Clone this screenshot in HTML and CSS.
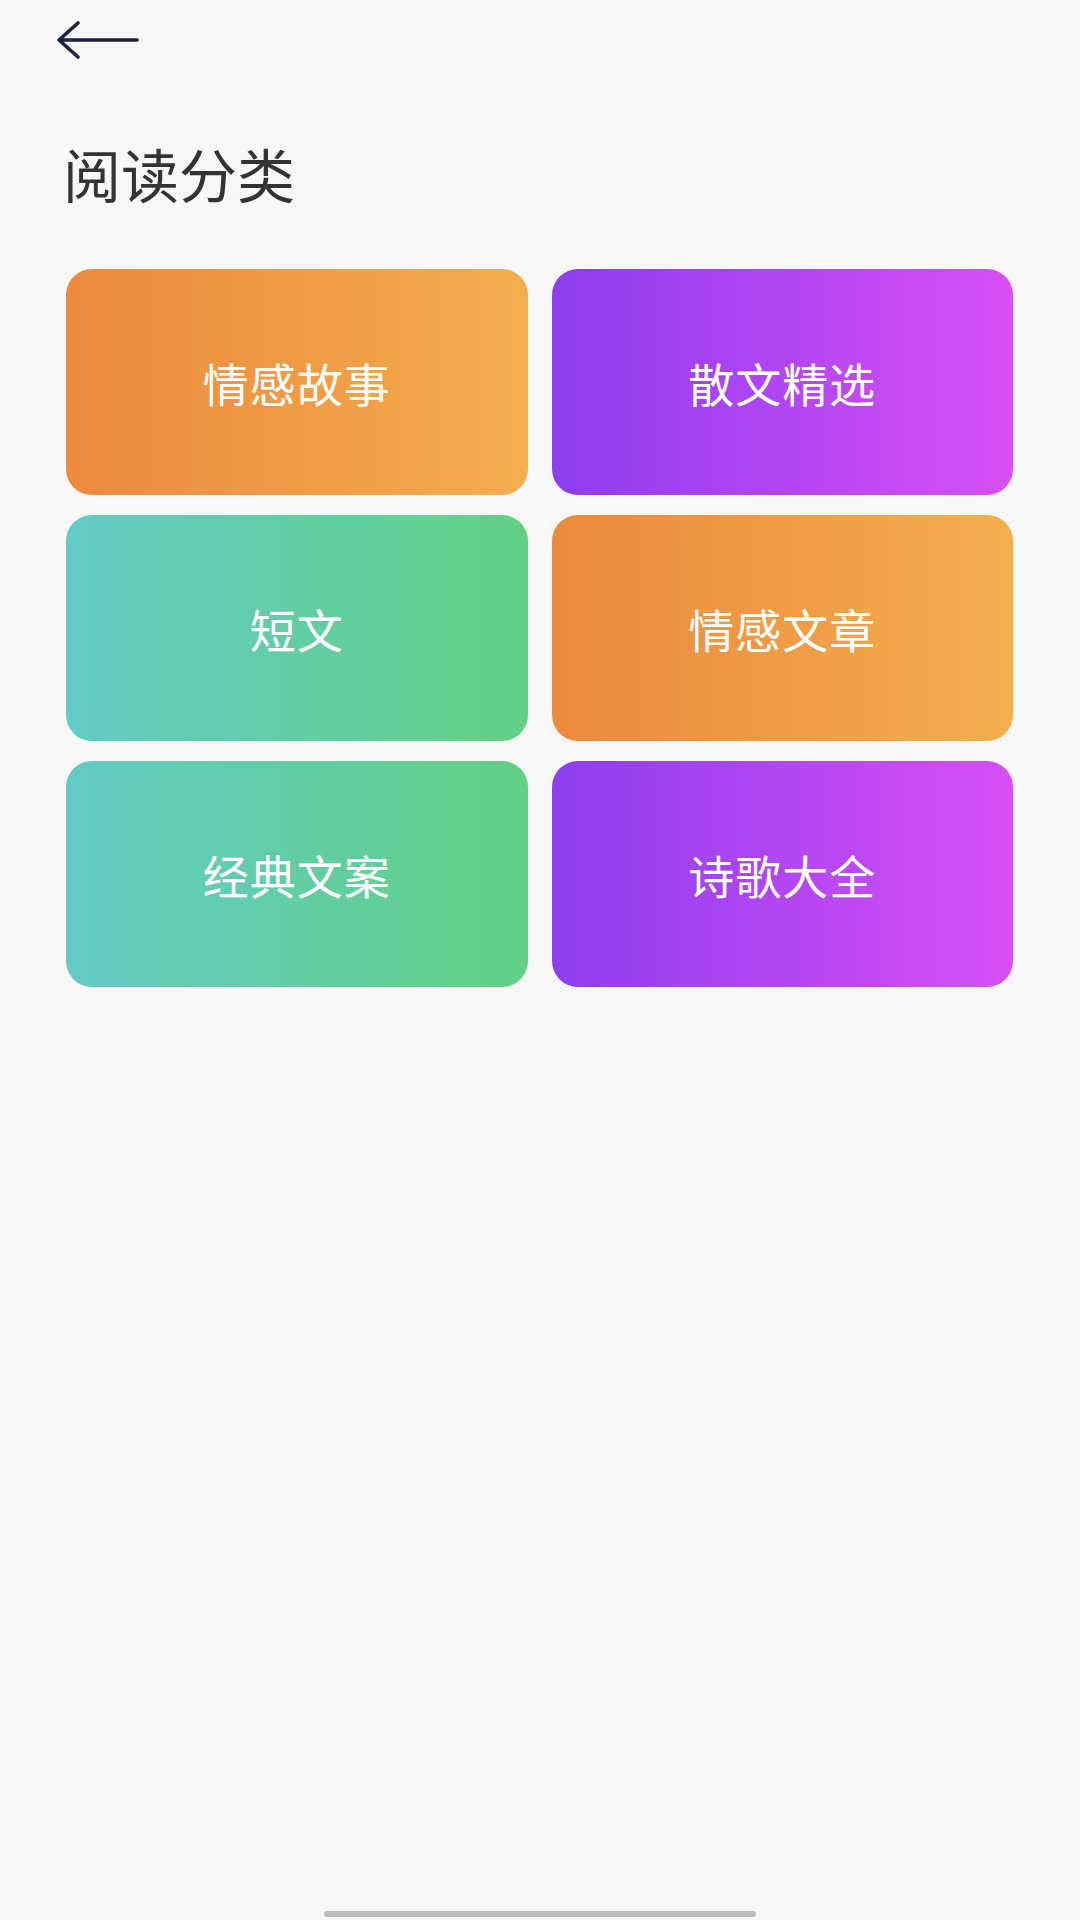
FILE: index.html
```html
<!DOCTYPE html>
<html lang="zh-CN">
<head>
    <meta charset="UTF-8">
    <meta name="viewport" content="width=device-width, initial-scale=1.0">
    <title>阅读分类</title>
    <link rel="stylesheet" href="styles.css">
</head>
<body>
    <div class="page">
        <div class="topbar">
            <a class="back" href="#">
                <svg width="84" height="42" viewBox="0 0 84 42">
                    <path d="M3 20 H81 M3 20 L22 3 M3 20 L22 37" fill="none" stroke="#1c2140" stroke-width="3.6" stroke-linecap="round" stroke-linejoin="round"/>
                </svg>
            </a>
        </div>

        <h1 class="title">阅读分类</h1>

        <div class="grid">
            <div class="card orange">情感故事</div>
            <div class="card purple">散文精选</div>
            <div class="card green">短文</div>
            <div class="card orange">情感文章</div>
            <div class="card green">经典文案</div>
            <div class="card purple">诗歌大全</div>
        </div>
    </div>

    <div class="home-bar"></div>
</body>
</html>
```

FILE: styles.css
```css
html, body {
    margin: 0;
    padding: 0;
}
body {
    font-family: "Noto Sans CJK SC", "Noto Sans", sans-serif;
    background-color: #f7f7f7;
    width: 1080px;
    height: 1920px;
    position: relative;
    overflow: hidden;
}
.page {
    padding: 0 67px 0 66px;
}
.topbar {
    height: 80px;
    display: flex;
    align-items: flex-start;
    padding-top: 20px;
    box-sizing: border-box;
}
.back {
    display: block;
    margin-left: -10px;
    line-height: 0;
}
.title {
    margin: 64px 0 0 -3px;
    font-size: 58px;
    font-weight: normal;
    color: #333;
    line-height: 1;
}
.grid {
    margin-top: 67px;
    display: grid;
    grid-template-columns: 1fr 1fr;
    gap: 20px 24px;
}
.card {
    height: 226px;
    border-radius: 26px;
    display: flex;
    align-items: center;
    justify-content: center;
    color: #fff;
    font-size: 46px;
    letter-spacing: 1px;
}
.orange {
    background: linear-gradient(to right, #ec893d, #f3ae4d);
}
.purple {
    background: linear-gradient(to right, #8d3df0, #d84ff5);
}
.green {
    background: linear-gradient(to right, #62cbc5, #62d084);
}
.home-bar {
    position: absolute;
    left: 324px;
    bottom: 3px;
    width: 432px;
    height: 6px;
    border-radius: 3px;
    background-color: #bcbcbc;
}
```
